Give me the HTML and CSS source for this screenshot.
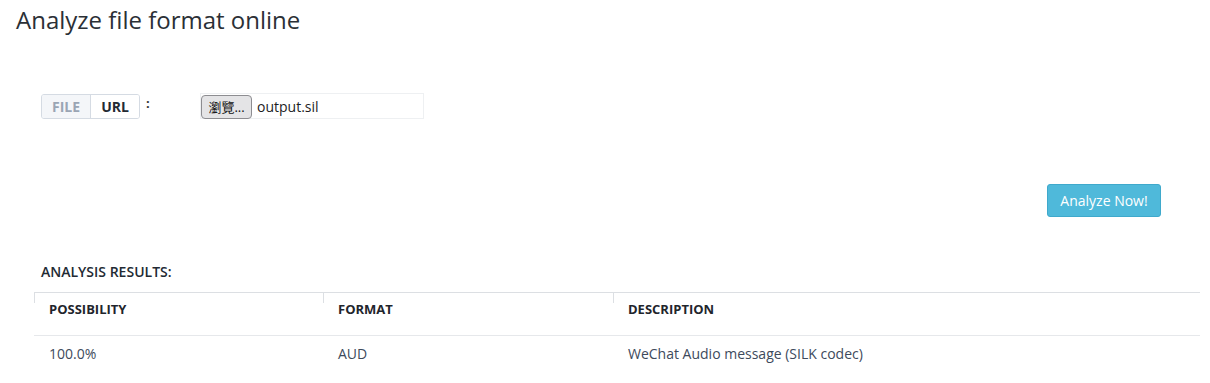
FILE: index.html
```html
<!DOCTYPE html>
<html>
<head>
<meta charset="utf-8">
<link rel="stylesheet" href="styles.css">
</head>
<body>
<h1 class="title">Analyze file format online</h1>
<div class="form-row">
  <div class="toggle">
    <span class="tg tg-off">FILE</span>
    <span class="tg tg-on">URL</span>
  </div>
  <span class="colon">:</span>
  <div class="file-input">
    <span class="file-btn">瀏覽...</span>
    <span class="file-name">output.sil</span>
  </div>
</div>
<div class="actions">
  <button class="analyze">Analyze Now!</button>
</div>
<div class="results-label">ANALYSIS RESULTS:</div>
<table class="results">
  <thead>
    <tr><th>POSSIBILITY</th><th>FORMAT</th><th>DESCRIPTION</th></tr>
  </thead>
  <tbody>
    <tr><td>100.0%</td><td>AUD</td><td>WeChat Audio message (SILK codec)</td></tr>
  </tbody>
</table>
</body>
</html>
```
FILE: styles.css
```css
html, body {
  margin: 0;
  padding: 0;
  background: #fff;
  font-family: "Open Sans", "Noto Sans CJK TC", sans-serif;
  color: #2f343a;
}
.title {
  margin: 3px 0 0 16px;
  font-size: 24px;
  font-weight: 400;
  line-height: 33px;
  color: #2b3036;
}
.form-row {
  display: flex;
  align-items: center;
  margin: 57px 0 0 41px;
  height: 26px;
}
.toggle {
  display: flex;
  border: 1px solid #d5dbe3;
  border-radius: 3px;
  height: 23px;
  overflow: hidden;
}
.tg {
  display: flex;
  align-items: center;
  justify-content: center;
  font-size: 14px;
  font-weight: 700;
  width: 48px;
}
.tg-off {
  background: #f4f6f9;
  color: #9aa5b4;
  border-right: 1px solid #d5dbe3;
}
.tg-on {
  background: #fff;
  color: #232a33;
}
.colon {
  font-size: 13px;
  font-weight: 700;
  margin-left: 6px;
  width: 54px;
  margin-top: -6px;
  color: #333;
}
.file-input {
  display: flex;
  align-items: center;
  width: 224px;
  height: 26px;
  border: 1px solid #eef0f2;
  box-sizing: border-box;
}
.file-btn {
  display: flex;
  align-items: center;
  justify-content: center;
  box-sizing: border-box;
  height: 24px;
  width: 51px;
  margin-top: 1px;
  background: #e4e4e6;
  border: 1px solid #8d8d91;
  border-radius: 4px;
  font-size: 13px;
  color: #111;
}
.file-name {
  font-size: 14px;
  margin-left: 5px;
  color: #1d1d1f;
}
.actions {
  display: flex;
  justify-content: flex-end;
  margin: 65px 49px 0 0;
}
.analyze {
  width: 114px;
  height: 33px;
  background: #4fb9da;
  border: 1px solid #3fa9cc;
  border-radius: 3px;
  color: #fff;
  font-family: "Open Sans", sans-serif;
  font-size: 14px;
  padding: 0;
}
.results-label {
  margin: 45px 0 0 41px;
  font-size: 14px;
  font-weight: 600;
  color: #222a33;
  line-height: 20px;
}
.results {
  margin: 10px 10px 0 34px;
  width: 1166px;
  border-collapse: collapse;
  table-layout: fixed;
}
.results th, .results td {
  text-align: left;
  padding: 0 15px;
  box-sizing: border-box;
}
.results th {
  position: relative;
  height: 43px;
  border-top: 1px solid #dcdfe3;
  border-bottom: 1px solid #e6e8eb;
  font-size: 13px;
  font-weight: 700;
  line-height: 18px;
  color: #1f252c;
  vertical-align: top;
  padding-top: 7px;
}
.results th::before {
  content: "";
  position: absolute;
  left: 0;
  top: 0;
  width: 1px;
  height: 10px;
  background: #dcdfe3;
}
.results th:nth-child(1) { width: 289px; }
.results th:nth-child(2) { width: 290px; }
.results td {
  height: 36px;
  font-size: 14px;
  color: #3d4a5c;
  vertical-align: middle;
}
```
